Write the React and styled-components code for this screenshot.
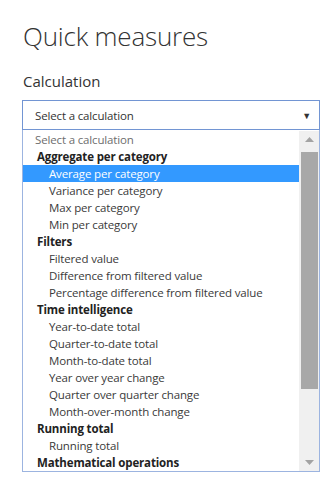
import React from 'react';
import styled, { createGlobalStyle } from 'styled-components';

const Global = createGlobalStyle`
  html, body {
    margin: 0;
    padding: 0;
    background: #fff;
  }
  body {
    font-family: "Open Sans", "Noto Sans", sans-serif;
    color: #333;
  }
`;

const Page = styled.div`
  width: 334px;
  height: 483px;
  box-sizing: border-box;
  padding: 18px 14px 0 22px;
  overflow: hidden;
`;

const Title = styled.h1`
  margin: 0 0 0 1px;
  font-weight: 300;
  font-size: 26px;
  line-height: 36px;
  color: #333;
  letter-spacing: -0.2px;
`;

const Label = styled.div`
  margin: 17px 0 0 1px;
  font-size: 15px;
  line-height: 20px;
  color: #333;
`;

const Select = styled.div`
  margin-top: 9px;
  height: 30px;
  box-sizing: border-box;
  border: 1px solid #7295d3;
  display: flex;
  align-items: center;
  justify-content: space-between;
  padding: 0 8px 0 12px;
  font-size: 11.5px;
  letter-spacing: -0.15px;
  color: #333;
`;

const Arrow = styled.span`
  font-size: 9px;
  color: #333;
`;

const List = styled.div`
  height: 342px;
  box-sizing: border-box;
  border: 1px solid #9cb4e0;
  border-top: none;
  padding-top: 1px;
  display: flex;
`;

const Rows = styled.div`
  flex: 1;
  overflow: hidden;
`;

const Row = styled.div`
  height: 17px;
  line-height: 17px;
  font-size: 11.5px;
  letter-spacing: -0.15px;
  white-space: nowrap;
  padding-left: ${p => p.indent}px;
  font-weight: ${p => (p.group ? 700 : 400)};
  color: ${p => (p.selected ? '#fff' : p.placeholder ? '#6d6d6d' : p.group ? '#222' : '#3a3a3a')};
  background: ${p => (p.selected ? '#3399ff' : 'transparent')};
`;

const Scrollbar = styled.div`
  width: 20px;
  background: #f0f0f0;
  display: flex;
  flex-direction: column;
`;

const ScrollBtn = styled.div`
  height: 17px;
  display: flex;
  align-items: center;
  justify-content: center;
`;

const Thumb = styled.div`
  height: 237px;
  margin: 4px 1px 0 2px;
  background: #a8a8a8;
`;

const Spacer = styled.div`
  flex: 1;
`;

const items = [
  { text: 'Select a calculation', placeholder: true },
  { text: 'Aggregate per category', group: true },
  { text: 'Average per category', selected: true },
  { text: 'Variance per category' },
  { text: 'Max per category' },
  { text: 'Min per category' },
  { text: 'Filters', group: true },
  { text: 'Filtered value' },
  { text: 'Difference from filtered value' },
  { text: 'Percentage difference from filtered value' },
  { text: 'Time intelligence', group: true },
  { text: 'Year-to-date total' },
  { text: 'Quarter-to-date total' },
  { text: 'Month-to-date total' },
  { text: 'Year over year change' },
  { text: 'Quarter over quarter change' },
  { text: 'Month-over-month change' },
  { text: 'Running total', group: true },
  { text: 'Running total' },
  { text: 'Mathematical operations', group: true },
];

const Tri = ({ down }) => (
  <svg width="9" height="5" viewBox="0 0 9 5">
    <path d={down ? 'M0 0 H9 L4.5 5 Z' : 'M0 5 H9 L4.5 0 Z'} fill="#a3a3a3" />
  </svg>
);

export default function App() {
  return (
    <>
      <Global />
      <Page>
        <Title>Quick measures</Title>
        <Label>Calculation</Label>
        <Select>
          <span>Select a calculation</span>
          <Arrow>▼</Arrow>
        </Select>
        <List>
          <Rows>
            {items.map((it, i) => (
              <Row
                key={i}
                indent={it.placeholder ? 12 : it.group ? 14 : 26}
                group={it.group}
                selected={it.selected}
                placeholder={it.placeholder}
              >
                {it.text}
              </Row>
            ))}
          </Rows>
          <Scrollbar>
            <ScrollBtn><Tri /></ScrollBtn>
            <Thumb />
            <Spacer />
            <ScrollBtn><Tri down /></ScrollBtn>
          </Scrollbar>
        </List>
      </Page>
    </>
  );
}
